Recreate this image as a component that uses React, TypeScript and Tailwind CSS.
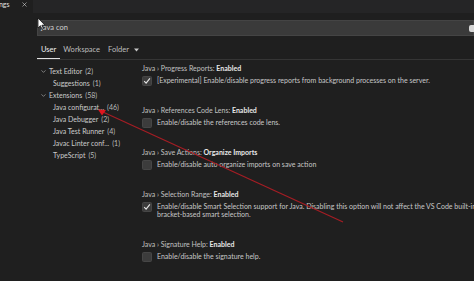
import React from 'react';
import { ChevronDown, X } from 'lucide-react';

type Setting = {
  name: string;
  value: string;
  checked: boolean;
  lines: string[];
  h: string;
};

const settings: Setting[] = [
  {
    name: 'Progress Reports',
    value: 'Enabled',
    checked: true,
    lines: ['[Experimental] Enable/disable progress reports from background processes on the server.'],
    h: 'h-[42px]',
  },
  {
    name: 'References Code Lens',
    value: 'Enabled',
    checked: false,
    lines: ['Enable/disable the references code lens.'],
    h: 'h-[42px]',
  },
  {
    name: 'Save Actions',
    value: 'Organize Imports',
    checked: false,
    lines: ['Enable/disable auto organize imports on save action'],
    h: 'h-[42px]',
  },
  {
    name: 'Selection Range',
    value: 'Enabled',
    checked: true,
    lines: [
      'Enable/disable Smart Selection support for Java. Disabling this option will not affect the VS Code built-in word-based and',
      'bracket-based smart selection.',
    ],
    h: 'h-[50.7px]',
  },
  {
    name: 'Signature Help',
    value: 'Enabled',
    checked: false,
    lines: ['Enable/disable the signature help.'],
    h: 'h-[42px]',
  },
];

const tree = [
  { label: 'Text Editor', count: 2, group: true },
  { label: 'Suggestions', count: 1, group: false },
  { label: 'Extensions', count: 58, group: true },
  { label: 'Java configurat...', count: 46, group: false },
  { label: 'Java Debugger', count: 2, group: false },
  { label: 'Java Test Runner', count: 4, group: false },
  { label: 'Javac Linter conf...', count: 1, group: false },
  { label: 'TypeScript', count: 5, group: false },
];

function Checkbox({ checked }: { checked: boolean }) {
  return (
    <div className="w-[10px] h-[10px] shrink-0 rounded-[1.5px] bg-[#3c3c3c] border border-[#464646] flex items-center justify-center">
      {checked && (
        <svg width="8" height="8" viewBox="0 0 8 8">
          <path d="M1.2 4.2 L3.1 6.2 L6.9 1.4" fill="none" stroke="#e6e6e6" strokeWidth="1.1" />
        </svg>
      )}
    </div>
  );
}

export default function App() {
  return (
    <div
      className="relative w-[474px] h-[281px] overflow-hidden bg-[#1f1f1f] text-[#cccccc]"
      style={{ fontFamily: "Lato, 'Noto Sans', sans-serif" }}
    >
      {/* Tab strip */}
      <div className="flex h-[13px]">
        <div className="w-[33px] shrink-0 overflow-hidden flex items-start bg-[#1f1f1f]">
          <span className="ml-[-15px] text-[7px] leading-[8px] text-[#e4e4e4] whitespace-nowrap">Settings</span>
          <X className="ml-[11px] mt-[1px] w-[7px] h-[7px] shrink-0 text-[#d8d8d8]" strokeWidth={2} />
        </div>
        <div className="flex-1 bg-[#252526]" />
      </div>

      {/* Search */}
      <div className="ml-[37px] mt-[7px] h-[16px] bg-[#3a3a3a] border border-[#444] relative flex items-center pl-[3px]">
        <span className="text-[7.5px] text-[#cfcfcf] leading-[8px]">java con</span>
        <div className="absolute right-[-3px] top-[4px] w-[7px] h-[7px] rounded-[2px] bg-[#d6d6d6]" />
      </div>

      {/* Scope tabs */}
      <div className="ml-[37px] h-[24px] flex border-b border-[#353535] text-[7.5px] leading-[8px]">
        <div className="px-[4px] pt-[10px] border-b-[1.5px] border-[#e2e2e2] text-[#f0f0f0]">User</div>
        <div className="pl-[3px] pt-[10px] text-[#bdbdbd]">Workspace</div>
        <div className="pl-[8px] pt-[10px] flex items-start text-[#bdbdbd]">
          Folder
          <svg className="ml-[5px] mt-[2px]" width="5" height="4" viewBox="0 0 5 4">
            <polygon points="0,0.5 5,0.5 2.5,3.5" fill="#c8c8c8" />
          </svg>
        </div>
      </div>

      {/* Body */}
      <div className="flex">
        <div className="w-[137px] shrink-0 pt-[5.8px] pl-[40px] text-[7px]">
          {tree.map((t) => (
            <div key={t.label} className="h-[11.9px] flex items-center whitespace-nowrap">
              {t.group ? (
                <ChevronDown className="w-[7px] h-[7px] mr-[2px] text-[#bdbdbd]" strokeWidth={2} />
              ) : (
                <span className="w-[13px] shrink-0" />
              )}
              <span className="text-[#cccccc]">{t.label}</span>
              <span className="ml-[3px] text-[#bbbbbb]">({t.count})</span>
            </div>
          ))}
        </div>

        <div className="flex-1 pl-[5px] pt-[3.5px] text-[7px] whitespace-nowrap">
          {settings.map((s) => (
            <div key={s.name} className={s.h}>
              <div className="h-[9px] leading-[9px] text-[#c2c2c2]">
                Java › {s.name}: <span className="font-bold text-[#e8e8e8]">{s.value}</span>
              </div>
              <div className="mt-[3px] flex">
                <Checkbox checked={s.checked} />
                <div className="ml-[5px] leading-[8.5px] text-[#c8c8c8]">
                  {s.lines.map((l) => (
                    <div key={l}>{l}</div>
                  ))}
                </div>
              </div>
            </div>
          ))}
        </div>
      </div>

      {/* Red annotation arrow */}
      <svg className="absolute left-0 top-0 pointer-events-none" width="474" height="281">
        <line x1="343" y1="222" x2="103" y2="112" stroke="#a51d24" strokeWidth="1.2" />
        <polygon points="98,109.5 106,110 102,115.5" fill="#e0161f" />
      </svg>

      {/* Mouse pointer */}
      <svg className="absolute left-[37px] top-[17px]" width="9" height="13" viewBox="0 0 9 13">
        <path d="M1 1 L1 11 L3.4 8.7 L5 12.2 L6.4 11.6 L4.9 8.2 L8 8.2 Z" fill="#ffffff" stroke="#111" strokeWidth="0.8" />
      </svg>
    </div>
  );
}
